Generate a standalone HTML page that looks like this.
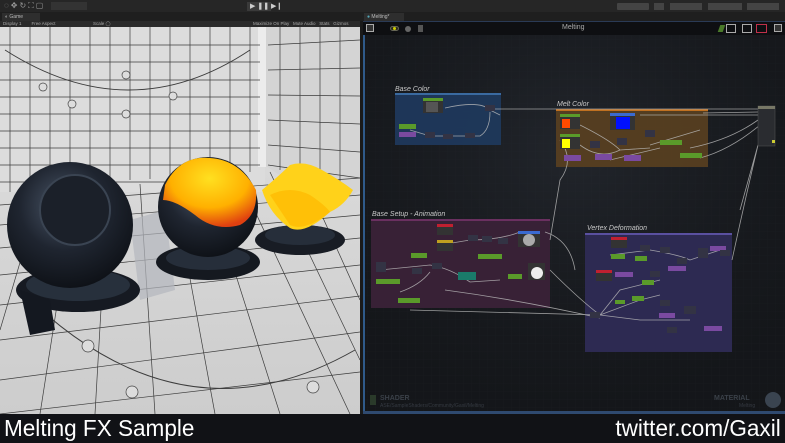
<!DOCTYPE html>
<html><head><meta charset="utf-8"><style>
*{margin:0;padding:0;box-sizing:border-box}
body{width:785px;height:442px;overflow:hidden;background:#111216;font-family:"Liberation Sans",sans-serif;position:relative}
.abs{position:absolute}
.t{color:#9a9a9a;font-size:5px;white-space:nowrap}
</style></head><body>
<div class="abs" style="left:0;top:0;width:785px;height:12px;background:#262626"></div>
<div class="abs t" style="left:4px;top:1px;font-size:8px;color:#999;letter-spacing:2px">◌✥↻⛶▢</div>
<div class="abs" style="left:51px;top:2px;width:36px;height:8px;background:#333"></div>
<div class="abs" style="left:247px;top:2px;width:24px;height:9px;background:#3a3a3a"></div>
<div class="abs t" style="left:250px;top:2px;color:#ccc;font-size:7px">▶ ❚❚ ▶❙</div>
<div class="abs" style="left:617px;top:3px;width:32px;height:7px;background:#444;border-radius:1px"></div>
<div class="abs" style="left:654px;top:3px;width:10px;height:7px;background:#444"></div>
<div class="abs" style="left:670px;top:3px;width:32px;height:7px;background:#444"></div>
<div class="abs" style="left:708px;top:3px;width:34px;height:7px;background:#444"></div>
<div class="abs" style="left:747px;top:3px;width:32px;height:7px;background:#444"></div>
<div class="abs" style="left:0;top:12px;width:785px;height:9px;background:#1f1f1f"></div>
<div class="abs" style="left:2px;top:13px;width:38px;height:8px;background:#2e2e2e"></div>
<div class="abs t" style="left:5px;top:14px;color:#bbb">◐ Game</div>
<div class="abs" style="left:364px;top:13px;width:40px;height:8px;background:#2e2e2e"></div>
<div class="abs t" style="left:367px;top:14px;color:#bbb"><span style="color:#5ab">●</span> Melting*</div>
<div class="abs" style="left:0;top:21px;width:360px;height:6px;background:#2a2a2a"></div>
<div class="abs t" style="left:3px;top:21px;font-size:4.5px;color:#aaa">Display 1 &nbsp;&nbsp;&nbsp;&nbsp;&nbsp;&nbsp; Free Aspect &nbsp;&nbsp;&nbsp;&nbsp;&nbsp;&nbsp;&nbsp;&nbsp;&nbsp;&nbsp;&nbsp;&nbsp;&nbsp;&nbsp;&nbsp;&nbsp;&nbsp;&nbsp;&nbsp;&nbsp;&nbsp;&nbsp;&nbsp;&nbsp;&nbsp;&nbsp;&nbsp;&nbsp; Scale ◯</div>
<div class="abs t" style="left:253px;top:21px;font-size:4.5px;color:#aaa">Maximize On Play &nbsp; Mute Audio &nbsp; Stats &nbsp; Gizmos</div>
<svg class="abs" style="left:0;top:27px" width="360" height="387" viewBox="0 27 360 387">
<defs>
<radialGradient id="sph" cx="0.45" cy="0.35" r="0.7"><stop offset="0" stop-color="#4a5668"/><stop offset="0.5" stop-color="#1f2530"/><stop offset="1" stop-color="#0c0f14"/></radialGradient>
<radialGradient id="fire" cx="0.5" cy="0.3" r="0.7"><stop offset="0" stop-color="#ffe020"/><stop offset="0.6" stop-color="#ffb000"/><stop offset="1" stop-color="#e04010"/></radialGradient>
<linearGradient id="fl" x1="0" y1="0" x2="0" y2="1"><stop offset="0" stop-color="#e0e0e0"/><stop offset="1" stop-color="#cdcdcd"/></linearGradient>
</defs>
<rect x="0" y="27" width="360" height="387" fill="url(#fl)"/>
<rect x="0" y="27" width="265" height="165" fill="#dcdcdc"/>
<polygon points="265,27 360,27 360,190 330,210 265,165" fill="#d4d4d4"/>
<rect x="258" y="27" width="8" height="140" fill="#ececec"/>
<g stroke="#3c3c3c" stroke-width="0.7" fill="none">
<path d="M0,45 H260 M0,62 H260 M0,80 H260 M0,97 H260 M0,114 H260 M0,131 H260 M0,148 H260 M0,165 H260 M0,182 H230"/>
<path d="M10,27V192 M30,27V190 M50,27V188 M70,27V186 M90,27V184 M110,27V182 M130,27V180 M150,27V179 M170,27V177 M190,27V176 M210,27V175 M230,27V173 M250,27V172"/>
<path d="M268,45 L360,40 M268,70 L360,68 M268,95 L360,96 M268,120 L360,124 M268,145 L360,152 M268,165 L360,178 M280,27 V170 M300,27 V178 M320,27 V186 M340,27 V194"/>
<path d="M5,50 Q130,130 250,50" stroke-width="0.9"/>
<path d="M0,205 L360,178 M0,225 L360,195 M0,248 L360,215 M0,275 L360,238 M0,305 L360,265 M0,340 L360,296 M0,380 L360,332 M0,414 L360,372"/>
<path d="M0,330 L40,195 M40,414 L75,190 M95,414 L108,187 M155,414 L140,184 M215,414 L172,181 M280,414 L205,178 M350,414 L238,175 M360,360 L270,172 M360,300 L305,178"/>
<path d="M20,290 Q180,450 355,350" stroke-width="1"/>
</g>
<g fill="#ddd" stroke="#444" stroke-width="0.7">
<circle cx="88" cy="346" r="6"/><circle cx="132" cy="392" r="6"/><circle cx="313" cy="387" r="6"/><circle cx="126" cy="75" r="4"/><circle cx="43" cy="87" r="4"/><circle cx="72" cy="104" r="4"/><circle cx="126" cy="114" r="4"/><circle cx="173" cy="96" r="4"/>
</g>
<polygon points="130,220 165,210 175,290 140,300" fill="#b4b6bd" opacity="0.7"/>
<ellipse cx="78" cy="290" rx="62" ry="22" fill="#161a22"/>
<ellipse cx="78" cy="285" rx="52" ry="16" fill="#27303c"/>
<path d="M20,290 L30,335 L55,330 L50,300Z" fill="#141820"/>
<circle cx="70" cy="225" r="63" fill="url(#sph)"/>
<circle cx="75" cy="210" r="35" fill="#1b2029" stroke="#3a4452" stroke-width="2"/>
<ellipse cx="208" cy="262" rx="52" ry="18" fill="#151920"/>
<ellipse cx="208" cy="258" rx="42" ry="12" fill="#262e3a"/>
<circle cx="208" cy="207" r="50" fill="url(#sph)"/>
<path d="M165,185 Q180,155 210,158 Q240,160 256,190 Q258,215 240,225 Q215,232 195,215 Q175,200 163,200Z" fill="url(#fire)"/>
<ellipse cx="300" cy="240" rx="45" ry="15" fill="#181c24"/>
<ellipse cx="300" cy="235" rx="35" ry="10" fill="#262e3a"/>
<path d="M262,190 Q280,175 290,165 Q305,160 322,170 Q340,180 353,190 Q345,205 330,212 Q305,235 290,228 Q270,215 262,190Z" fill="#ffd21a"/>
<path d="M270,195 Q290,185 310,195 Q325,205 330,212 Q305,232 290,225Z" fill="#ffb800" opacity="0.7"/>
</svg>
<div class="abs" style="left:360px;top:21px;width:3px;height:393px;background:#1a1a1a"></div>
<div class="abs" style="left:363px;top:21px;width:422px;height:14px;background:#0e0f12;border-top:1px solid #2a3a55"></div>
<div class="abs" style="left:366px;top:24px;width:8px;height:8px;border:1px solid #aaa;background:#333"></div>
<div class="abs" style="left:390px;top:26px;width:9px;height:5px;border-radius:3px;background:#2a2a20;border:1px solid #665"></div>
<div class="abs" style="left:393px;top:27px;width:3px;height:3px;border-radius:2px;background:#cc0"></div>
<div class="abs" style="left:405px;top:26px;width:6px;height:6px;border-radius:3px;background:#666"></div>
<div class="abs" style="left:418px;top:25px;width:5px;height:7px;background:#555"></div>
<div class="abs t" style="left:562px;top:24px;font-size:7px;color:#aaa">Melting</div>
<div class="abs" style="left:719px;top:25px;width:5px;height:7px;background:#4a7a2a;transform:skew(-20deg)"></div>
<div class="abs" style="left:726px;top:24px;width:10px;height:9px;border:1px solid #aaa"></div>
<div class="abs" style="left:742px;top:24px;width:10px;height:9px;border:1px solid #aaa"></div>
<div class="abs" style="left:756px;top:24px;width:11px;height:9px;border:1px solid #c0304a"></div>
<div class="abs" style="left:774px;top:24px;width:8px;height:8px;border:1px solid #aaa;background:#333"></div>
<svg class="abs" style="left:363px;top:35px" width="422" height="379" viewBox="363 35 422 379">
<defs><pattern id="g" width="8" height="8" patternUnits="userSpaceOnUse"><rect width="8" height="8" fill="#1c1f24"/><path d="M8,0V8H0" fill="none" stroke="#23272d" stroke-width="0.6"/></pattern>
<radialGradient id="bg2" cx="0.5" cy="0.3" r="0.8"><stop offset="0" stop-color="#262a31" stop-opacity="0.6"/><stop offset="1" stop-color="#000" stop-opacity="0.3"/></radialGradient></defs>
<rect x="363" y="35" width="422" height="379" fill="url(#g)"/>
<rect x="363" y="35" width="422" height="379" fill="url(#bg2)"/>
<rect x="363" y="35" width="2" height="379" fill="#2f5a8a"/>
<rect x="363" y="411" width="422" height="3" fill="#2f4a70"/>
<rect x="395" y="93" width="106" height="52" fill="#1f3a5e" opacity="0.9"/>
<rect x="395" y="93" width="106" height="2" fill="#3a6aa0"/>
<rect x="556" y="109" width="152" height="58" fill="#5a4020" opacity="0.9"/>
<rect x="556" y="109" width="152" height="2" fill="#c07020"/>
<rect x="371" y="219" width="179" height="89" fill="#3a2238" opacity="0.95"/>
<rect x="371" y="219" width="179" height="2" fill="#6a3060"/>
<rect x="585" y="233" width="147" height="119" fill="#2e2b55" opacity="0.95"/>
<rect x="585" y="233" width="147" height="2" fill="#5a50a0"/>
<g font-family="Liberation Sans" font-style="italic" font-size="7" fill="#c8c8c8">
<text x="395" y="91">Base Color</text><text x="557" y="106">Melt Color</text>
<text x="372" y="216">Base Setup - Animation</text><text x="587" y="230">Vertex Deformation</text></g>
<g stroke="#bdbdbd" stroke-width="0.8" fill="none" opacity="0.8">
<path d="M495,109 H758 M703,113 L758,112 M640,115 L758,115 M690,148 Q730,140 758,120 M700,158 Q730,150 760,125 M560,140 Q575,160 560,180 L550,240 M545,232 Q570,240 575,270 M740,210 L758,145 Q745,200 732,260 M445,290 Q520,300 600,318 M550,270 Q580,300 600,315"/>
<path d="M445,108 Q480,100 490,110 L500,115 M410,130 L430,136 H480 Q490,130 490,112"/>
<path d="M580,125 Q610,140 620,150 L650,148 M580,145 Q600,160 620,150 M610,160 L660,148 M650,145 L700,130"/>
<path d="M380,270 L430,265 Q450,268 470,282 M400,292 Q420,285 430,272 M440,245 L470,240 Q500,240 520,232 M470,282 L500,280 M410,310 L600,315"/>
<path d="M600,315 L620,290 L660,280 M600,315 L640,320 L690,320 M600,315 L640,300 L660,295 M610,255 L650,250 Q680,255 690,260 L720,250"/>
</g>
<g>
<rect x="758" y="106" width="17" height="40" fill="#2a2c30" stroke="#555" stroke-width="0.5"/>
<rect x="758" y="106" width="17" height="3" fill="#776"/>
<rect x="772" y="140" width="3" height="3" fill="#cc3"/>
<rect x="423" y="98" width="20" height="15" fill="#333"/><rect x="423" y="98" width="20" height="3" fill="#5a9a2a"/><rect x="426" y="102" width="12" height="10" fill="#555"/>
<rect x="399" y="124" width="17" height="5" fill="#5a9a2a"/><rect x="399" y="132" width="17" height="5" fill="#7a4aa0"/>
<rect x="425" y="132" width="10" height="6" fill="#334"/><rect x="443" y="134" width="10" height="5" fill="#334"/><rect x="465" y="133" width="10" height="5" fill="#334"/><rect x="485" y="105" width="10" height="6" fill="#334"/>
<rect x="560" y="114" width="20" height="15" fill="#333"/><rect x="560" y="114" width="20" height="3" fill="#5a9a2a"/><rect x="562" y="119" width="8" height="9" fill="#ff4a00"/>
<rect x="560" y="134" width="20" height="15" fill="#333"/><rect x="560" y="134" width="20" height="3" fill="#5a9a2a"/><rect x="562" y="139" width="8" height="9" fill="#ffff00"/>
<rect x="610" y="113" width="25" height="17" fill="#333"/><rect x="610" y="113" width="25" height="3" fill="#3a6ad0"/><rect x="616" y="117" width="14" height="12" fill="#0010ff"/>
<rect x="564" y="155" width="17" height="6" fill="#7a4aa0"/><rect x="595" y="154" width="17" height="6" fill="#7a4aa0"/><rect x="624" y="155" width="17" height="6" fill="#7a4aa0"/>
<rect x="590" y="141" width="10" height="7" fill="#334"/><rect x="617" y="138" width="10" height="7" fill="#334"/><rect x="645" y="130" width="10" height="7" fill="#334"/>
<rect x="660" y="140" width="22" height="5" fill="#5a9a2a"/><rect x="680" y="153" width="22" height="5" fill="#5a9a2a"/>
<rect x="437" y="224" width="16" height="11" fill="#333"/><rect x="437" y="224" width="16" height="3" fill="#c02030"/>
<rect x="437" y="240" width="16" height="11" fill="#333"/><rect x="437" y="240" width="16" height="3" fill="#c0a020"/>
<rect x="518" y="231" width="22" height="16" fill="#333"/><rect x="518" y="231" width="22" height="3" fill="#3a6ad0"/><circle cx="529" cy="240" r="6" fill="#aaa"/>
<rect x="528" y="263" width="17" height="17" fill="#333"/><circle cx="537" cy="273" r="6" fill="#eee"/>
<rect x="411" y="253" width="16" height="5" fill="#5a9a2a"/><rect x="478" y="254" width="24" height="5" fill="#5a9a2a"/><rect x="376" y="279" width="24" height="5" fill="#5a9a2a"/><rect x="398" y="298" width="22" height="5" fill="#5a9a2a"/><rect x="508" y="274" width="14" height="5" fill="#5a9a2a"/>
<rect x="376" y="262" width="10" height="10" fill="#334"/><rect x="458" y="272" width="18" height="8" fill="#1a7a6a"/>
<rect x="468" y="235" width="10" height="6" fill="#334"/><rect x="482" y="236" width="10" height="6" fill="#334"/><rect x="498" y="238" width="10" height="6" fill="#334"/><rect x="432" y="263" width="10" height="6" fill="#334"/><rect x="412" y="268" width="10" height="6" fill="#334"/>
<rect x="611" y="237" width="16" height="11" fill="#333"/><rect x="611" y="237" width="16" height="3" fill="#c02030"/>
<rect x="596" y="270" width="16" height="11" fill="#333"/><rect x="596" y="270" width="16" height="3" fill="#c02030"/>
<rect x="611" y="254" width="14" height="5" fill="#5a9a2a"/><rect x="635" y="256" width="12" height="5" fill="#5a9a2a"/><rect x="642" y="280" width="12" height="5" fill="#5a9a2a"/><rect x="632" y="296" width="12" height="5" fill="#5a9a2a"/><rect x="615" y="300" width="10" height="4" fill="#5a9a2a"/>
<rect x="615" y="272" width="18" height="5" fill="#7a4aa0"/><rect x="668" y="266" width="18" height="5" fill="#7a4aa0"/><rect x="710" y="246" width="16" height="5" fill="#7a4aa0"/><rect x="704" y="326" width="18" height="5" fill="#7a4aa0"/><rect x="659" y="313" width="16" height="5" fill="#7a4aa0"/>
<rect x="640" y="245" width="10" height="6" fill="#334"/><rect x="660" y="247" width="10" height="6" fill="#334"/><rect x="677" y="258" width="10" height="6" fill="#334"/><rect x="698" y="248" width="10" height="10" fill="#334"/><rect x="720" y="250" width="10" height="6" fill="#334"/><rect x="650" y="271" width="10" height="6" fill="#334"/><rect x="684" y="306" width="12" height="8" fill="#334"/><rect x="667" y="327" width="10" height="6" fill="#334"/><rect x="590" y="312" width="10" height="6" fill="#334"/><rect x="660" y="300" width="10" height="6" fill="#334"/>
</g>
<text x="380" y="400" font-family="Liberation Sans" font-weight="bold" font-size="7" fill="#3a4048">SHADER</text>
<text x="380" y="407" font-family="Liberation Sans" font-size="5" fill="#353a42">ASE/SampleShaders/Community/Gaxil/Melting</text>
<rect x="370" y="395" width="6" height="10" fill="#2a3a2a"/>
<text x="714" y="400" font-family="Liberation Sans" font-weight="bold" font-size="7" fill="#3a4048">MATERIAL</text>
<text x="739" y="407" font-family="Liberation Sans" font-size="5" fill="#353a42">Melting</text>
<circle cx="773" cy="400" r="8" fill="#3a4450"/>
</svg>
<div class="abs" style="left:0;top:414px;width:785px;height:28px;background:#111216"></div>
<div class="abs" style="left:4px;top:413px;color:#fff;font-size:23px;line-height:30px;transform:scaleX(0.98);transform-origin:left">Melting FX Sample</div>
<div class="abs" style="right:4px;top:413px;color:#fff;font-size:23px;line-height:30px;transform:scaleX(0.98);transform-origin:right">twitter.com/Gaxil</div>
</body></html>
